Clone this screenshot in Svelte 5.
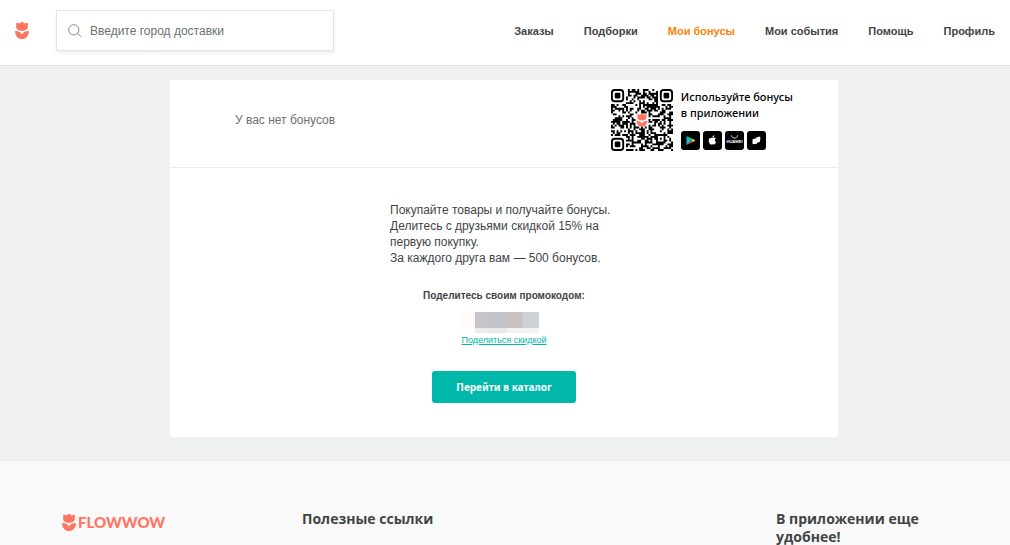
<script>
  const navLinks = [
    { title: "Заказы" },
    { title: "Подборки" },
    { title: "Мои бонусы", active: true },
    { title: "Мои события" },
    { title: "Помощь" },
    { title: "Профиль" },
  ];

  const mosaic = [
    ["#fefcfb", "#c6c4c8", "#c1c5c9", "#c8c2c3", "#cdd1d5"],
    ["#ffffff", "#ebebed", "#e6eaec", "#f3f3f4", "#f1f1f2"],
  ];

  const QR_SIZE = 33;

  const inFinder = (x, y) => {
    const far = QR_SIZE - 8;
    return (x < 8 && y < 8) || (x >= far && y < 8) || (x < 8 && y >= far);
  };

  const inLogo = (x, y) => x > 12 && x < 20 && y > 12 && y < 20;

  // ring of the small alignment square
  const alignment = (x, y) => {
    const d = Math.max(Math.abs(x - 26), Math.abs(y - 26));
    return d < 3 ? d !== 1 : null;
  };

  const buildQr = () => {
    let seed = 4217;
    let path = "";
    for (let y = 0; y < QR_SIZE; y++) {
      for (let x = 0; x < QR_SIZE; x++) {
        seed = (seed * 48271) % 2147483647;
        if (inFinder(x, y) || inLogo(x, y)) continue;
        const dark = alignment(x, y) ?? seed / 2147483647 < 0.5;
        if (dark) path += `M${x} ${y}h1v1h-1z`;
      }
    }
    return path;
  };

  const qrPath = buildQr();
  const finders = [
    [0, 0],
    [26, 0],
    [0, 26],
  ];

  let city = $state("");
</script>

{#snippet tulip()}
  <path
    d="M1 1.2C2 .4 3.1.8 3.8 1.6 4.6.7 5.8-.1 6.5 0 7.2-.1 8.4.7 9.2 1.6 9.9.8 11 .4 12 1.2V4.5C12 7 9.6 8.4 6.5 8.4S1 7 1 4.5Z"
  />
  <path
    d="M0 8.6C3.2 8.4 5.4 9.7 6.5 12 7.6 9.7 9.8 8.4 13 8.6 13 12.8 10.4 16 6.5 16S0 12.8 0 8.6Z"
  />
{/snippet}

<header class="header">
  <a href="/" class="logo" aria-label="Flowwow">
    <svg viewBox="0 0 13 16" width="14" height="17">{@render tulip()}</svg>
  </a>
  <label class="search">
    <svg class="search-icon" viewBox="0 0 14 14" width="14" height="14">
      <circle cx="5.8" cy="5.8" r="5.1" />
      <path d="M9.5 9.5 13.5 13" />
    </svg>
    <input
      type="text"
      placeholder="Введите город доставки"
      aria-label="Введите город доставки"
      bind:value={city}
    />
  </label>
  <nav class="nav">
    {#each navLinks as link}
      <a href="/" class:active={link.active}>{link.title}</a>
    {/each}
  </nav>
</header>

<main class="main">
  <section class="card">
    <div class="card-top">
      <p class="balance">У вас нет бонусов</p>
      <div class="app">
        <svg class="qr" viewBox="0 0 33 33" width="62" height="62">
          <path d={qrPath} />
          {#each finders as [x, y]}
            <rect class="ring" x={x + 0.5} y={y + 0.5} width="6" height="6" rx="1.5" />
            <rect x={x + 2} y={y + 2} width="3" height="3" rx="0.6" />
          {/each}
          <g class="qr-logo" transform="translate(13.6 13.1) scale(0.44)">
            {@render tulip()}
          </g>
        </svg>
        <div>
          <p class="app-title">Используйте бонусы<br />в приложении</p>
          <div class="stores">
            <a href="/" aria-label="Google Play">
              <svg viewBox="0 0 19 19" width="19" height="19">
                <path fill="#00c8e8" d="M5.500 5v9l4.500-4.500z" />
                <path fill="#17d67c" d="M5.500 5l4.500 4.500 2.100-1.600z" />
                <path fill="#f24154" d="M5.500 14l4.500-4.500 2.100 1.600z" />
                <path fill="#ffcb1f" d="M12.100 7.900 14.300 9.500 12.100 11.100 10 9.500z" />
              </svg>
            </a>
            <a href="/" aria-label="App Store">
              <svg viewBox="0 0 19 19" width="19" height="19">
                <path
                  fill="#fff"
                  d="M9.6 7c.8-.5 2.3-.7 3.2.5-1.4 1-1.2 3 .3 3.6-.5 1.3-1.2 2.4-2 2.4-.6 0-.9-.3-1.5-.3s-1 .3-1.5.3C6.8 13.5 5.5 11 5.8 9 6.1 7 7.9 6.2 9.6 7ZM9.5 6.4C9.5 5.2 10.2 4.5 11.3 4.3 11.4 5.5 10.6 6.4 9.5 6.4Z"
                />
              </svg>
            </a>
            <a href="/" aria-label="Huawei AppGallery" class="huawei">
              <svg viewBox="0 0 19 19" width="19" height="19">
                <path
                  fill="none"
                  stroke="#fff"
                  stroke-width="0.9"
                  d="M6.3 4.3C6.8 8 12.2 8 12.7 4.3"
                />
                <text x="9.5" y="12.4">HUAWEI</text>
              </svg>
            </a>
            <a href="/" aria-label="RuStore">
              <svg viewBox="0 0 19 19" width="19" height="19">
                <path
                  fill="#fff"
                  d="M5.6 8.3 9 7.2 9.3 6.5 12.6 5.6 13.4 6.5 13 10.8 10.3 11.7 9.8 12.8 6.3 13.3 5.4 12.3Z"
                />
                <path stroke="#aaa" stroke-width="0.4" d="M9.2 7.2 9.8 12.5" />
              </svg>
            </a>
          </div>
        </div>
      </div>
    </div>

    <div class="card-body">
      <p class="promo">
        Покупайте товары и получайте бонусы.<br />
        Делитесь с друзьями скидкой 15% на первую покупку.<br />
        За каждого друга вам — 500 бонусов.
      </p>
      <p class="share-title">Поделитесь своим промокодом:</p>
      <div class="code">
        {#each mosaic as row}
          {#each row as color}
            <span style="background: {color}"></span>
          {/each}
        {/each}
      </div>
      <a href="/" class="share-link">Поделиться скидкой</a>
      <button class="catalog-btn">Перейти в каталог</button>
    </div>
  </section>
</main>

<footer class="footer">
  <a href="/" class="footer-logo">
    <svg viewBox="0 0 13 16" width="14" height="17">{@render tulip()}</svg>
    FLOWWOW
  </a>
  <h3>Полезные ссылки</h3>
  <h3>В приложении еще удобнее!</h3>
</footer>

<style>
  :global(body) {
    background: #f9f9f9;
    font-family: "Liberation Sans", Arial, sans-serif;
    font-size: 12px;
    line-height: 16px;
    color: #3f4545;
  }

  p,
  h3 {
    margin: 0;
  }

  svg {
    display: block;
  }

  .header {
    display: flex;
    align-items: center;
    box-sizing: border-box;
    height: 66px;
    padding: 0 15px 4px;
    background: #fff;
    border-bottom: 1px solid #dfe1e1;
  }

  .logo {
    fill: #ff7563;
  }

  .search {
    display: flex;
    align-items: center;
    gap: 8px;
    box-sizing: border-box;
    width: 278px;
    height: 41px;
    margin-left: 27px;
    padding: 0 11px;
    border: 1px solid #e3e5e5;
    box-shadow: 0 2px 3px rgba(0, 0, 0, 0.07);
  }

  .search-icon {
    fill: none;
    stroke: #8a8c8c;
    stroke-width: 1;
  }

  .search input {
    flex: 1;
    min-width: 0;
    padding: 0;
    border: 0;
    outline: none;
    font: inherit;
    color: #3f4545;
  }

  .search input::placeholder {
    color: #6c7272;
    opacity: 1;
  }

  .nav {
    display: flex;
    gap: 30px;
    margin-left: auto;
    font-size: 11px;
    font-weight: 700;
  }

  .nav a {
    color: #3f4545;
    text-decoration: none;
  }

  .nav .active {
    color: #ff7f0a;
  }

  .main {
    padding: 14px 172px 24px 170px;
    background: #eff1f1;
  }

  .card {
    background: #fff;
    border-radius: 3px;
  }

  .card-top {
    display: flex;
    justify-content: space-between;
    padding: 9px 45px 16px 65px;
    border-bottom: 1px solid #eceeee;
  }

  .balance {
    padding-top: 23px;
    color: #6c7272;
  }

  .app {
    display: flex;
    gap: 8px;
  }

  .ring {
    fill: none;
    stroke: #000;
    stroke-width: 1;
  }

  .qr-logo {
    fill: #ff7563;
  }

  .app-title {
    font-family: "Noto Sans", sans-serif;
    font-size: 11px;
    font-weight: 500;
    color: #000;
  }

  .stores {
    display: flex;
    gap: 3px;
    padding-top: 10px;
  }

  .stores a {
    background: #000;
    border-radius: 3px;
  }

  .huawei text {
    fill: #fff;
    font-size: 4px;
    font-weight: 700;
    text-anchor: middle;
  }

  .card-body {
    display: flex;
    flex-direction: column;
    align-items: center;
    padding: 34px 0;
  }

  .promo {
    width: 228px;
  }

  .share-title {
    margin-top: 22px;
    font-size: 10px;
    font-weight: 700;
  }

  .code {
    display: grid;
    grid-template-columns: repeat(5, 16px);
    grid-template-rows: 16px 5px;
    margin-top: 8px;
    padding-right: 10px;
  }

  .share-link {
    font-size: 9px;
    line-height: 14px;
    color: #00b8a9;
  }

  .catalog-btn {
    width: 144px;
    height: 32px;
    margin-top: 24px;
    padding: 0;
    border: 0;
    border-radius: 3px;
    background: #00b8a9;
    color: #fff;
    font-family: "Noto Sans", sans-serif;
    font-size: 10px;
    font-weight: 700;
    cursor: pointer;
  }

  .footer {
    display: grid;
    grid-template-columns: 240px 1fr 174px;
    align-items: start;
    padding: 49px 60px 0 62px;
  }

  .footer-logo {
    display: flex;
    align-items: center;
    gap: 2px;
    padding-top: 4px;
    fill: #ff7563;
    color: #ff7563;
    font-family: Lato, sans-serif;
    font-size: 15px;
    font-weight: 900;
    line-height: 17px;
    text-decoration: none;
  }

  h3 {
    font-family: "Open Sans", sans-serif;
    font-size: 14px;
    font-weight: 700;
    line-height: 18px;
  }
</style>
